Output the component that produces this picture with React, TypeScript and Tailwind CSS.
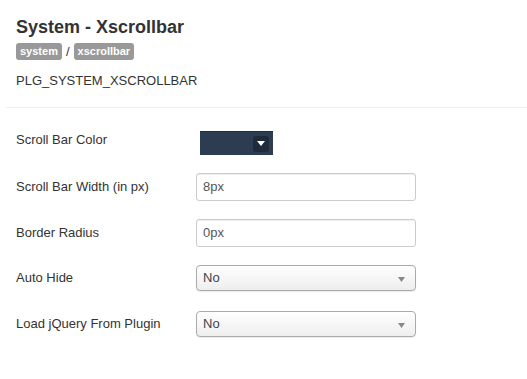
import React from "react";

const font = { fontFamily: '"Liberation Sans", Arial, sans-serif' };

function SelectBox({ value }: { value: string }) {
  return (
    <div className="relative flex h-[26px] w-[220px] items-center rounded-[4px] border border-[#aaaaaa] bg-gradient-to-b from-[#ffffff] to-[#eeeeee] pl-[6px] text-[13px] text-[#444444] shadow-[0_1px_1px_rgba(0,0,0,0.08)]">
      <span>{value}</span>
      <svg className="absolute right-[10px] top-[11px]" width="7" height="5" viewBox="0 0 7 5">
        <path d="M0 0 L7 0 L3.5 5 Z" fill="#888888" />
      </svg>
    </div>
  );
}

function TextInput({ value }: { value: string }) {
  return (
    <div className="flex h-[28px] w-[220px] items-center rounded-[3px] border border-[#cccccc] bg-white pl-[6px] text-[13px] text-[#555555] shadow-[inset_0_1px_1px_rgba(0,0,0,0.075)]">
      {value}
    </div>
  );
}

export default function App() {
  return (
    <div className="min-h-[379px] w-[527px] bg-white text-[#333333]" style={font}>
      <div className="pl-[16px] pt-[17px]">
        <h2 className="text-[18px] font-bold leading-[20px] text-[#333333]">System - Xscrollbar</h2>
        <div className="mt-[6px] flex items-center gap-[4px] text-[13px]">
          <span className="rounded-[3px] bg-[#999999] px-[4px] text-[11px] font-bold leading-[17px] text-white">system</span>
          <span className="leading-[17px] text-[#333333]">/</span>
          <span className="rounded-[3px] bg-[#999999] px-[4px] text-[11px] font-bold leading-[17px] text-white">xscrollbar</span>
        </div>
        <p className="mt-[12px] text-[13px] leading-[18px] text-[#333333]">PLG_SYSTEM_XSCROLLBAR</p>
      </div>
      <div className="ml-[6px] mt-[17px] h-px bg-[#eeeeee]" />
      <div className="mt-[19px] flex flex-col pl-[16px] text-[13px] leading-[18px]">
        <div className="flex h-[28px] items-start">
          <label className="w-[180px] pt-[4px]">Scroll Bar Color</label>
          <div className="ml-[4px] mt-[4px] flex h-[24px] w-[73px] items-center justify-end border-t border-[#1f2d3f] bg-[#2c3d52] pr-[4px]">
            <div className="flex h-[16px] w-[16px] items-center justify-center rounded-[3px] bg-[#1f2b3b]">
              <svg width="8" height="5" viewBox="0 0 8 5">
                <path d="M0 0 L8 0 L4 5 Z" fill="#ffffff" />
              </svg>
            </div>
          </div>
        </div>
        <div className="mt-[18px] flex h-[28px] items-center">
          <label className="w-[180px]">Scroll Bar Width (in px)</label>
          <TextInput value="8px" />
        </div>
        <div className="mt-[18px] flex h-[28px] items-center">
          <label className="w-[180px]">Border Radius</label>
          <TextInput value="0px" />
        </div>
        <div className="mt-[18px] flex h-[26px] items-center">
          <label className="w-[180px]">Auto Hide</label>
          <SelectBox value="No" />
        </div>
        <div className="mt-[20px] flex h-[26px] items-center">
          <label className="w-[180px]">Load jQuery From Plugin</label>
          <SelectBox value="No" />
        </div>
      </div>
    </div>
  );
}
